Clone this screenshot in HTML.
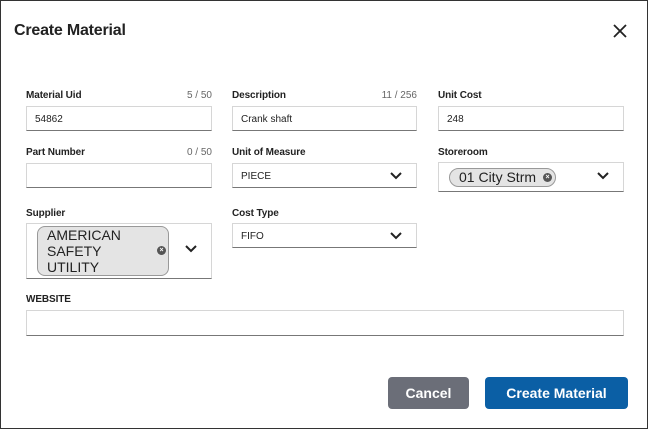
<!DOCTYPE html>
<html><head><style>
*{box-sizing:border-box;margin:0;padding:0}
body{width:648px;height:429px;background:#fff;font-family:"Liberation Sans",sans-serif;position:relative;overflow:hidden}
.frame{position:absolute;left:0;top:0;width:648px;height:429px;border:1px solid #333}
.a{position:absolute}
.lbl{font-size:10px;color:#222;font-weight:bold;letter-spacing:-0.1px}
.cnt{font-size:10px;color:#666;text-align:right}
.in{position:absolute;border:1px solid #d6d6d6;border-bottom:1px solid #777;background:#fff;font-size:10px;color:#222;padding-left:8px;padding-top:2px;display:flex;align-items:center}
.chev{position:absolute;width:14px;height:10px}
.chip{position:absolute;background:#e4e4e4;border:1px solid #999;border-radius:10px;font-size:14px;color:#222}
.x{position:absolute;width:9px;height:9px;border-radius:50%;background:#555;color:#fff;font-size:7px;line-height:9px;text-align:center;font-weight:bold}
.btn{position:absolute;border-radius:4px;color:#fff;font-weight:bold;font-size:14px;display:flex;align-items:center;justify-content:center}
</style></head><body>
<div class="frame"></div>
<div class="a" style="left:14px;top:22px;font-size:16px;color:#222;font-weight:bold;letter-spacing:-0.2px">Create Material</div>
<svg class="a" style="left:613px;top:24px" width="14" height="14"><path d="M1 1L13 13M13 1L1 13" stroke="#222" stroke-width="1.8"/></svg>

<div class="a lbl" style="left:26px;top:90px">Material Uid</div><div class="a cnt" style="left:160px;top:90px;width:52px">5 / 50</div>
<div class="in" style="left:26px;top:106px;width:186px;height:25px">54862</div>
<div class="a lbl" style="left:232px;top:90px">Description</div><div class="a cnt" style="left:360px;top:90px;width:57px">11 / 256</div>
<div class="in" style="left:232px;top:106px;width:185px;height:25px">Crank shaft</div>
<div class="a lbl" style="left:438px;top:90px">Unit Cost</div>
<div class="in" style="left:438px;top:106px;width:186px;height:25px">248</div>

<div class="a lbl" style="left:26px;top:147px">Part Number</div><div class="a cnt" style="left:160px;top:147px;width:52px">0 / 50</div>
<div class="in" style="left:26px;top:163px;width:186px;height:25px"></div>
<div class="a lbl" style="left:232px;top:147px">Unit of Measure</div>
<div class="in" style="left:232px;top:163px;width:185px;height:25px">PIECE</div>
<svg class="chev" style="left:389px;top:171px"><path d="M2 2L7 7L12 2" stroke="#222" stroke-width="2" fill="none"/></svg>
<div class="a lbl" style="left:438px;top:147px">Storeroom</div>
<div class="in" style="left:438px;top:162px;width:186px;height:30px"></div>
<div class="chip" style="left:449px;top:168px;width:107px;height:19px;padding-left:9px;line-height:17px">01 City Strm</div>
<div class="x" style="left:543px;top:173px">×</div>
<svg class="chev" style="left:596px;top:171px"><path d="M2 2L7 7L12 2" stroke="#222" stroke-width="2" fill="none"/></svg>

<div class="a lbl" style="left:26px;top:208px">Supplier</div>
<div class="in" style="left:26px;top:223px;width:186px;height:56px"></div>
<div class="chip" style="left:37px;top:226px;width:132px;height:50px;padding-left:9px;line-height:16px;border-radius:8px">AMERICAN<br>SAFETY<br>UTILITY</div>
<div class="x" style="left:157px;top:246px">×</div>
<svg class="chev" style="left:184px;top:244px"><path d="M2 2L7 7L12 2" stroke="#222" stroke-width="2" fill="none"/></svg>
<div class="a lbl" style="left:232px;top:208px">Cost Type</div>
<div class="in" style="left:232px;top:223px;width:185px;height:25px">FIFO</div>
<svg class="chev" style="left:389px;top:231px"><path d="M2 2L7 7L12 2" stroke="#222" stroke-width="2" fill="none"/></svg>

<div class="a lbl" style="left:26px;top:294px">WEBSITE</div>
<div class="in" style="left:26px;top:310px;width:598px;height:26px"></div>

<div class="btn" style="left:388px;top:377px;width:81px;height:32px;background:#6b6e78">Cancel</div>
<div class="btn" style="left:485px;top:377px;width:143px;height:32px;background:#0b5fa5">Create Material</div>
</body></html>
